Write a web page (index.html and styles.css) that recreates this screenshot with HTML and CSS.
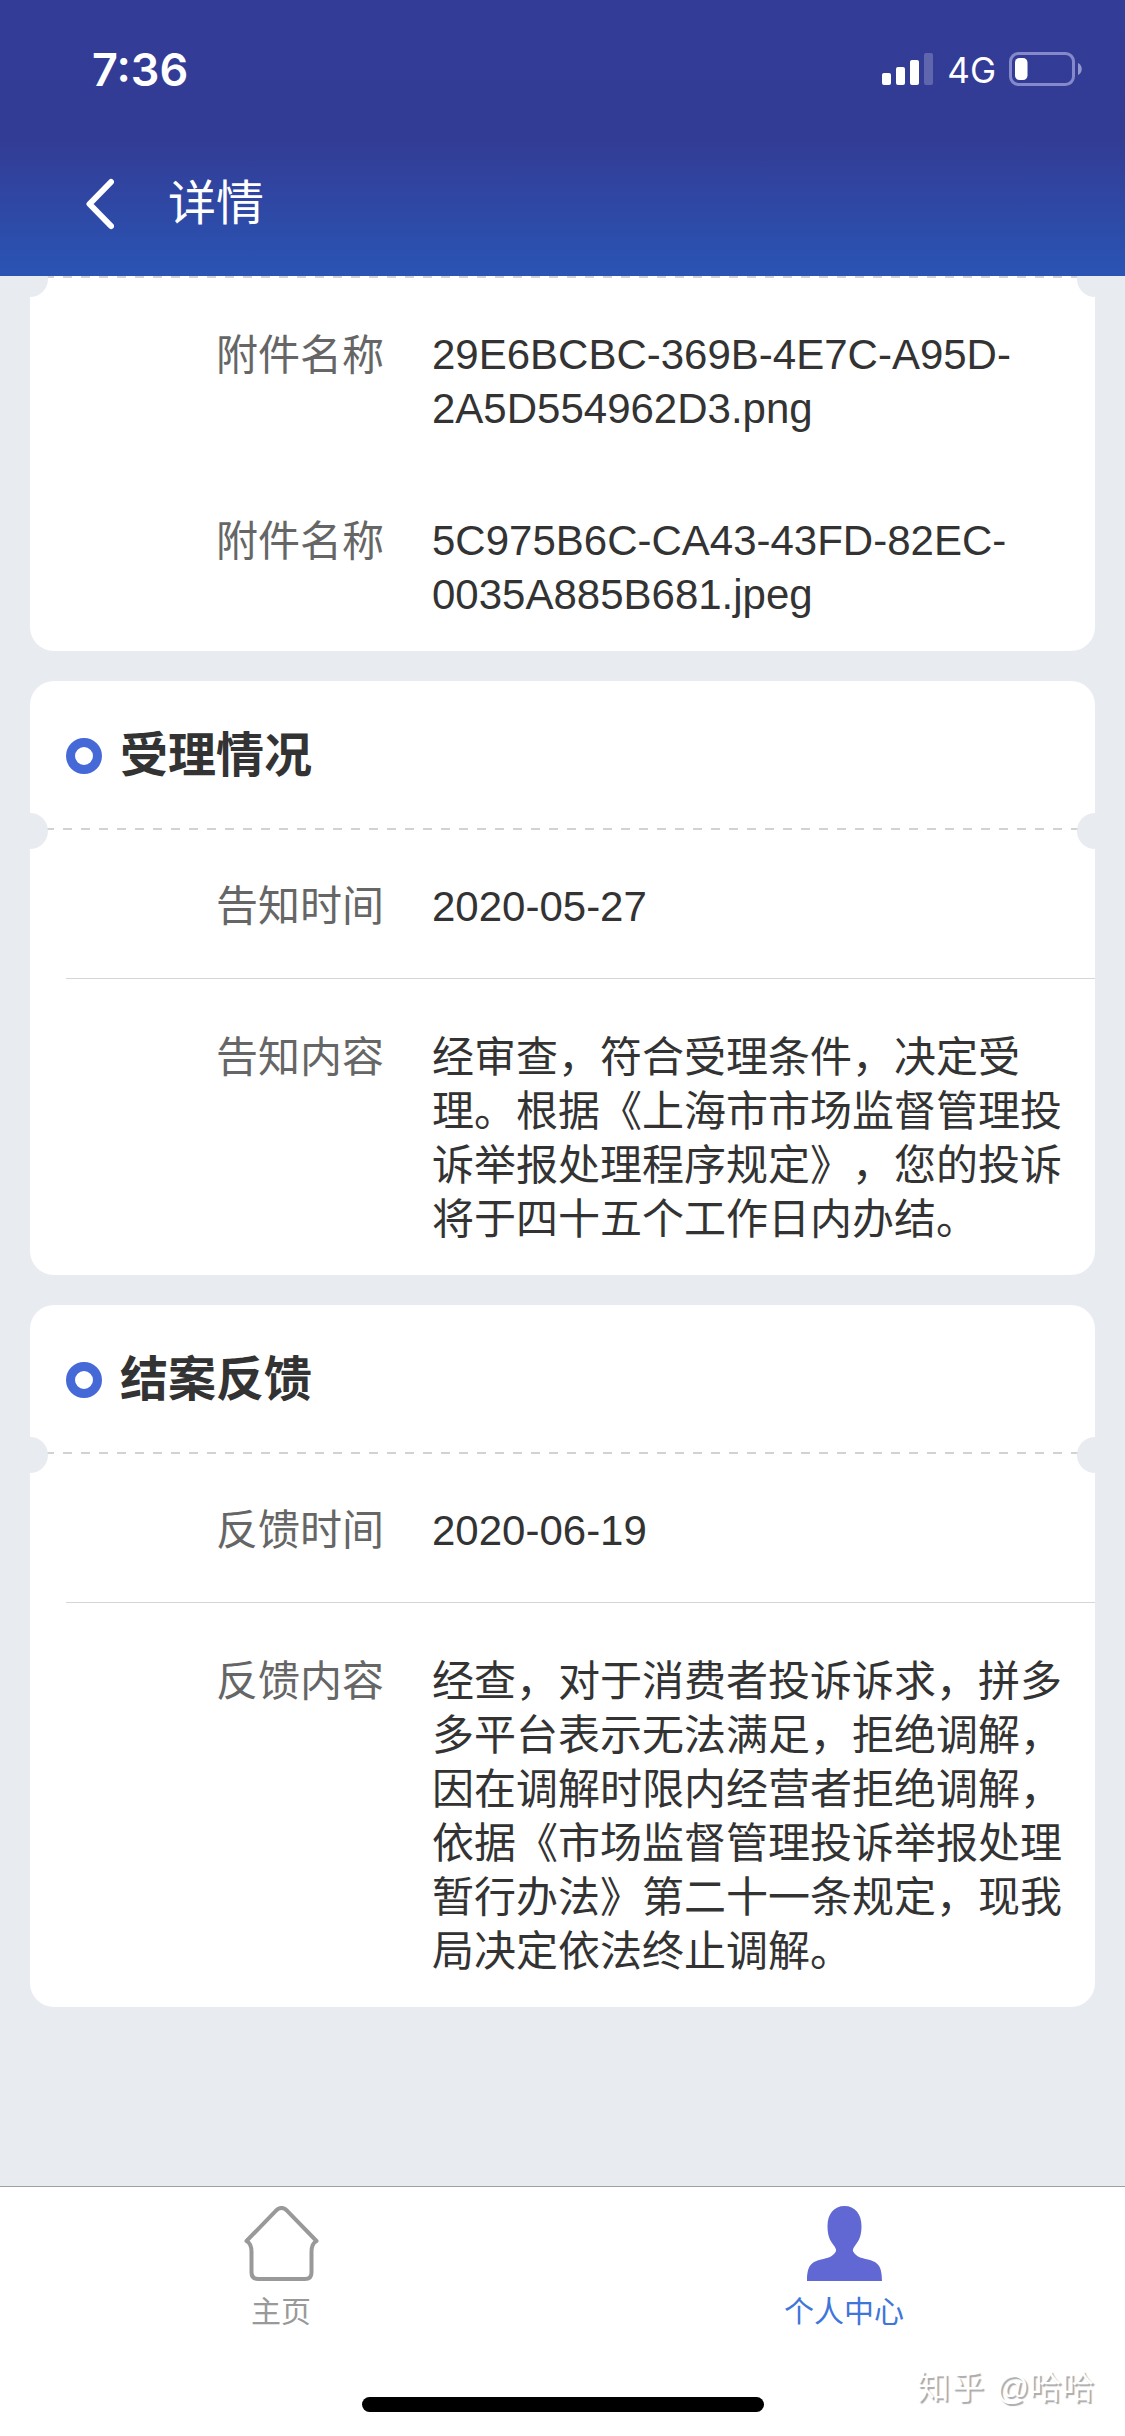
FILE: index.html
```html
<!DOCTYPE html>
<html lang="zh-CN">
<head>
<meta charset="utf-8">
<title>详情</title>
<link rel="stylesheet" href="styles.css">
</head>
<body>
<div class="screen">
  <header class="header">
    <div class="status">
      <span class="time">7:36</span>
      <svg class="signal" width="51" height="32" viewBox="0 0 51 32" fill="#fff">
        <rect x="0" y="20" width="9" height="12" rx="2"/>
        <rect x="14" y="14" width="9" height="18" rx="2"/>
        <rect x="28" y="7" width="9" height="25" rx="2"/>
        <rect x="42" y="0" width="9" height="32" rx="2" opacity=".22"/>
      </svg>
      <span class="net">4G</span>
      <svg class="battery" width="73" height="34" viewBox="0 0 73 34">
        <rect x="1.5" y="1.5" width="63" height="31" rx="8" fill="none" stroke="#8589cb" stroke-width="3"/>
        <rect x="6" y="6" width="12.500" height="22" rx="4.500" fill="#fff"/>
        <path d="M69 11C74 13 74 21 69 23Z" fill="#9598cf"/>
      </svg>
    </div>
    <nav class="nav">
      <svg class="back" width="28" height="54" viewBox="0 0 28 54" fill="none" stroke="#fff" stroke-width="6" stroke-linecap="round" stroke-linejoin="round"><path d="M25 5L3.500 27L25 49"/></svg>
      <h1 class="title">详情</h1>
    </nav>
  </header>

  <main class="content">
    <section class="card card-cut">
      <div class="divider"></div>
      <div class="row"><span class="label">附件名称</span><span class="value">29E6BCBC-369B-4E7C-A95D-<br>2A5D554962D3.png</span></div>
      <div class="row"><span class="label">附件名称</span><span class="value">5C975B6C-CA43-43FD-82EC-<br>0035A885B681.jpeg</span></div>
    </section>

    <section class="card">
      <div class="card-head"><i class="ring"></i><h2>受理情况</h2></div>
      <div class="divider"></div>
      <div class="row single"><span class="label">告知时间</span><span class="value">2020-05-27</span></div>
      <div class="row detail"><span class="label">告知内容</span><span class="value">经审查，符合受理条件，决定受理。根据《上海市市场监督管理投诉举报处理程序规定》，您的投诉将于四十五个工作日内办结。</span></div>
    </section>

    <section class="card">
      <div class="card-head"><i class="ring"></i><h2>结案反馈</h2></div>
      <div class="divider"></div>
      <div class="row single"><span class="label">反馈时间</span><span class="value">2020-06-19</span></div>
      <div class="row detail"><span class="label">反馈内容</span><span class="value">经查，对于消费者投诉诉求，拼多多平台表示无法满足，拒绝调解，因在调解时限内经营者拒绝调解，依据《市场监督管理投诉举报处理暂行办法》第二十一条规定，现我局决定依法终止调解。</span></div>
    </section>
  </main>

  <footer class="tabbar">
    <a class="tab">
      <svg width="75" height="75" viewBox="0 0 75 75" fill="none" stroke="#999" stroke-width="4" stroke-linejoin="round"><path d="M31.800 4.800Q37.500-.8 43.200 4.800L72.500 35Q67.500 37.500 67.500 46V66.500Q67.500 73 61 73H14Q7.500 73 7.500 66.500V46Q7.500 37.500 2.500 35Z"/></svg>
      <span>主页</span>
    </a>
    <a class="tab active">
      <svg width="75" height="75" viewBox="0 0 75 75" fill="#6168d4"><path d="M37.500 0C48 0 54.500 8 54.500 20C54.500 30 52 34.500 48.500 39C46.500 42 45 44 46.500 46C49 50.500 54 52 61 53.500C71 56 75 60 75 75H0C0 60 4 56 14 53.500C21 52 26 50.500 28.500 46C30 44 28.500 42 26.500 39C23 34.500 20.500 30 20.500 20C20.500 8 27 0 37.500 0Z"/></svg>
      <span>个人中心</span>
    </a>
  </footer>
  <div class="home-indicator"></div>
  <div class="watermark"><span class="brand">知乎</span><span>@哈哈</span></div>
</div>
</body>
</html>
```
FILE: styles.css
```css
* { box-sizing: border-box; }
body {
  margin: 0;
  font-family: "Liberation Sans", "Noto Sans CJK SC", sans-serif;
  color: #333;
  text-spacing-trim: space-all;
}
h1, h2 { margin: 0; }
svg { display: block; flex: none; }
.screen {
  position: relative;
  display: flex;
  flex-direction: column;
  width: 1125px;
  height: 2436px;
  overflow: hidden;
  background: #e8ebf0;
}
.header {
  flex: none;
  height: 276px;
  color: #fff;
  background: linear-gradient(#333c96 0, #333c95 138px, #2a54b4 276px);
}
.status {
  display: flex;
  align-items: center;
  height: 138px;
  padding: 0 43px 0 92px;
  font-family: Inter, sans-serif;
}
.time { flex: 1; font-size: 45px; font-weight: 600; }
.net { margin: 0 13px 0 14px; padding-top: 2px; font-size: 35px; font-weight: 400; }
.nav { display: flex; align-items: center; height: 132px; padding-left: 86px; }
.title { margin-left: 54px; font-size: 48px; font-weight: 400; line-height: 60px; }

.content {
  flex: 1;
  display: flex;
  flex-direction: column;
  gap: 30px;
  padding: 0 30px;
}
.card { flex: none; border-radius: 24px; background: #fff; }
.card-cut { height: 375px; border-top-left-radius: 0; border-top-right-radius: 0; overflow: hidden; }
.card-head { display: flex; align-items: center; height: 147px; padding: 3px 36px 0; }
.ring { width: 36px; height: 36px; border: 9px solid #4669d8; border-radius: 50%; }
.card-head h2 { margin-left: 18px; font-size: 48px; font-weight: 700; line-height: 60px; }
.divider {
  position: relative;
  height: 2px;
  background: repeating-linear-gradient(90deg, #d2d2d2 0 9px, transparent 9px 18px) -3px 0;
}
.divider::before,
.divider::after {
  content: "";
  position: absolute;
  top: -15px;
  width: 36px;
  height: 36px;
  border-radius: 50%;
  background: #e8ebf0;
}
.divider::before { left: -18px; }
.divider::after { right: -18px; }
.row {
  display: flex;
  margin-left: 36px;
  padding: 50px 30px 28px 0;
  font-size: 42px;
  line-height: 54px;
}
.row.detail { padding: 52px 30px 28px 0; }
.row.single { padding: 50px 0 44px; border-bottom: 1px solid #d6d6d6; }
.label { flex: none; width: 318px; margin-right: 48px; text-align: right; color: #666; }
.card-cut .label { padding-top: 1px; }
.value { flex: 1; }

.tabbar {
  flex: none;
  display: flex;
  height: 250px;
  border-top: 1px solid #a0a0a0;
  background: #fff;
}
.tab {
  flex: 1;
  display: flex;
  flex-direction: column;
  align-items: center;
  padding-top: 19px;
  font-size: 30px;
  line-height: 40px;
  color: #999;
}
.tab span { margin-top: 11px; }
.tab.active { padding-left: 1px; color: #3f76d9; }
.home-indicator {
  position: absolute;
  left: 362px;
  top: 2397px;
  width: 402px;
  height: 15px;
  border-radius: 8px;
  background: #000;
}
.watermark {
  position: absolute;
  left: 917px;
  top: 2366px;
  display: flex;
  gap: 10px;
  font-size: 32.500px;
  line-height: 44px;
  color: #fff;
  text-shadow: 2px 2px 1px #aaa;
}
.brand { letter-spacing: 2px; }
```
